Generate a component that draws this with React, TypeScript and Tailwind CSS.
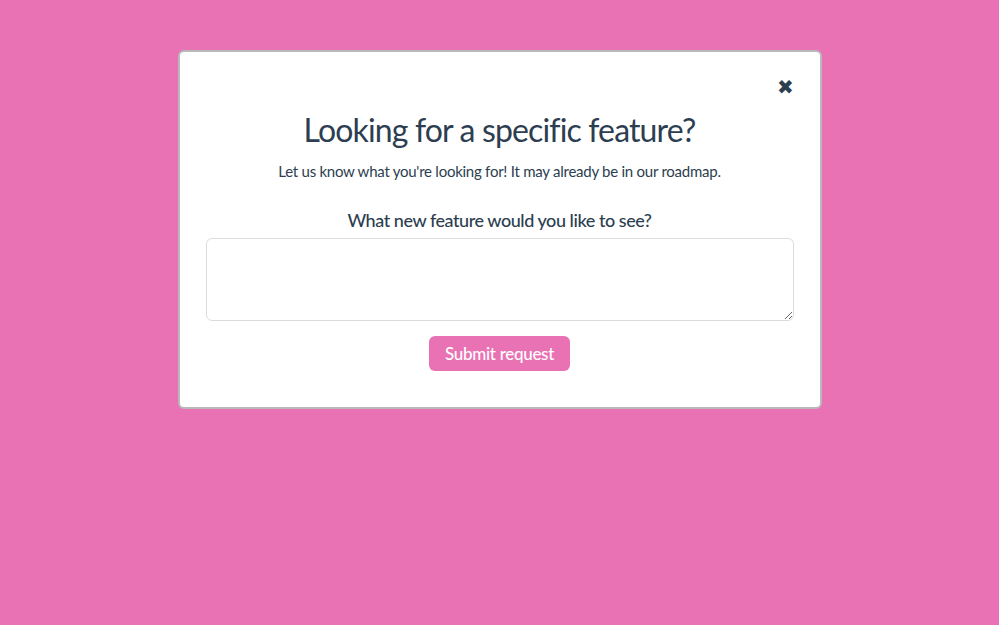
export default function App() {
  return (
    <div
      className="min-h-[625px] w-full bg-[#e972b4] pt-[50px]"
      style={{ fontFamily: "Lato, 'Noto Sans', sans-serif" }}
    >
      <div className="mx-auto w-[644px] rounded-md border-2 border-[#b9b9b9] bg-white px-[26px] pt-[20px] pb-[36px] text-[#2c3e50]">
        {/* Close */}
        <div className="flex justify-end">
          <span className="text-[20px] leading-[28px] text-[#2c3e50]">✖</span>
        </div>

        {/* Heading */}
        <h1 className="mt-[10px] text-center text-[32px] leading-[40px] font-normal tracking-[-0.85px]">
          Looking for a specific feature?
        </h1>
        <p className="mt-[10px] text-center text-[15px] leading-[22px] tracking-[-0.25px]">
          Let us know what you're looking for! It may already be in our roadmap.
        </p>

        {/* Form */}
        <label className="mt-[25px] block text-center text-[18px] leading-[26px] font-medium tracking-[-0.45px]">
          What new feature would you like to see?
        </label>
        <textarea className="mt-[5px] block h-[83px] w-full resize-y rounded-md border border-[#dcdcdc] px-3 py-2 text-[16px] outline-none" />
        <div className="mt-[15px] flex justify-center">
          <button className="h-[35px] w-[141px] rounded-md bg-[#e972b4] text-[17px] font-medium tracking-[-0.3px] text-white">
            Submit request
          </button>
        </div>
      </div>
    </div>
  );
}
